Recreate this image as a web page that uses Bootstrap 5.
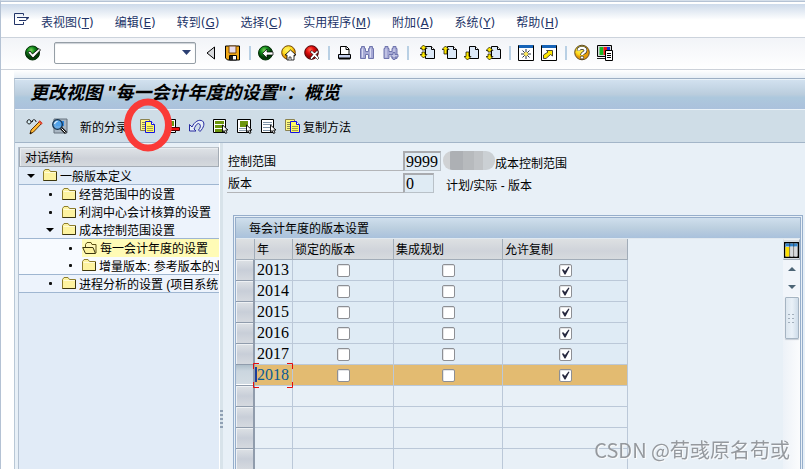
<!DOCTYPE html>
<html lang="zh-CN">
<head>
<meta charset="utf-8">
<meta name="viewport" content="width=device-width, initial-scale=1">
<title>更改视图 "每一会计年度的设置"：概览</title>
<link rel="stylesheet" href="https://cdn.jsdelivr.net/npm/bootstrap@5.3.0/dist/css/bootstrap.min.css">
<style>
body{font-family:"Liberation Sans","Noto Sans CJK SC",sans-serif;font-size:12px;line-height:18px;color:#000;background:#fff}
button,input{font:inherit;color:inherit}
button{background:none;border:0;padding:0}
svg{display:block;flex:none}
.app-shell{border-left:1px solid #b4c2d4;border-top:1px solid #d5dfea}
.menu-strip{height:37px;padding:6px 0 0 13px;gap:11px;border-top:1px solid #b4c2d4;background:linear-gradient(#fff 0 2px,#cddaea 2px,#fff 18px);border-bottom:1px solid #ccd3dc;font-family:"DejaVu Sans","Noto Sans CJK SC",sans-serif;color:#223468}
.menu-list{gap:21px}
.menu-list a{color:#223468;text-decoration:none;white-space:nowrap}
.std-bar{height:32px;padding:0 0 2px 24px;background:linear-gradient(#f2f4f8,#fff);border-bottom:1px solid #ccd1d9}
.command-box{width:142px;height:22px;border:1px solid #959ea6;border-radius:2px;background:#fff;margin:0 10px 0 13px;box-shadow:inset 0 1px 1px #cbd0d6}
.command-box input{border:0;background:none;min-width:0;outline:0}
.command-box button{width:22px}
.tool-sep{width:2px;height:14px;background:#b9d0e4;margin:0 7px 0 8px}
.tool-set{gap:7px}
.screen-wrap{margin-left:13px;background:linear-gradient(#fff,#e8eff6 8px);padding-top:8px}
.screen-pane{border-left:1px solid #b9c8d6;border-top:1px solid #9dafc4;background:#e8f0f7}
.title-bar{height:31px;padding:0 15px;border-top:1px solid #e9f2f9;border-bottom:1px solid #eaf2f8;background:linear-gradient(#d2e1ef,#bacddd 50%,#adc8dd 60%,#abc1dc);font-size:18px;line-height:27px;font-weight:700;font-style:italic;margin:0;white-space:nowrap}
.app-bar{height:33px;padding:0 11px;gap:8px;background:#cfdde7;border-bottom:1px solid #a3b5c8}
.icon-text{gap:2px}
.mark-wrap{position:relative}
.mark-ring{position:absolute;left:-17px;top:-20px;z-index:5;pointer-events:none}
.tree-pane{width:204px;flex:none;padding:4px 0 0 3px;border-right:0}
.tree-box{border-left:1px solid #b4c2d2;background:#e1ebf7}
.tree-head{height:20px;padding:2px 5px 0;border:1px solid #a4acb5;border-top-color:#bcc3ca;background:linear-gradient(#dfe3e7,#cdd1d8 60%,#d5d9dd);box-shadow:inset 1px 1px #e9ecef;margin-bottom:0;font-size:12px;line-height:16px;font-weight:400}
.tree-box ul{list-style:none;margin:0;padding:0}
.tree-row{height:18px;white-space:nowrap;overflow:hidden}
.tree-row button{white-space:nowrap;gap:2px;display:flex;align-items:center;overflow:hidden;text-align:left}
.tree-row button span{padding-top:2px}
.twig{width:12px;flex:none;display:flex;justify-content:center}
.tri{border:4px solid transparent;border-top-color:#000;border-bottom:0}
.dot{width:3px;height:3px;border-radius:1px;background:#111}
.lv-a{padding-left:6px}
.lv-b{padding-left:25px;background:#edf3fc}
.lv-c{padding-left:45px;background:#f7faff}
.twig+button{margin-left:6px}
.rule{border-bottom:1px solid #9fb6d1}
.current button{background:#fffbb6;height:18px;flex:1}
.splitter{width:4px;flex:none;background:#d8e3ea;border-left:1px solid #fff;padding-top:267px}
.grip{width:3px;height:19px;background:repeating-linear-gradient(#8fa0b4 0 2px,transparent 2px 4px)}
.form-rows{padding:8px 0 0 4px}
.form-line{height:22px}
.form-line label{width:176px;height:20px;line-height:22px;border-bottom:1px solid #b3b5b8;padding-left:1px}
.code-field{height:20px;border:2px solid #a9abaf;border-right-color:#b9c1c8;border-bottom-color:#b9c1c8;border-width:2px 1px 1px 2px;background:#dfebf4;padding:0 1px;outline:0;font-family:"Liberation Serif",serif;font-size:16px;line-height:16px}
.w-code{width:38px}.w-ver{width:31px}
.blotch{width:52px;height:19px;border-radius:9px;margin-left:2px;background:linear-gradient(90deg,#d0d2d4 0 7px,#adb0b4 7px 20px,#b7babd 20px 31px,#c0c3c6 31px 40px,#cbd0d4 40px)}
.grid-box{margin:20px 2px 0 10px;border:1px solid #96aecb;border-bottom:0;padding:1px 1px 0}
.grid-inner{border:1px solid #96aecb;border-bottom:0}
.grid-title{height:21px;margin:0;padding:2px 13px 0;font-size:12px;line-height:18px;font-weight:400;background:linear-gradient(#cfdfed,#bccfdf 50%,#a9c1dc);border-bottom:1px solid #e1e9f0}
.year-grid{table-layout:fixed;border-collapse:separate;border-spacing:0;width:392px;flex:none}
.year-grid th,.year-grid td{height:21px;padding:0 0 0 1px;border-right:1px solid #bbc8d8;border-bottom:1px solid #bbc8d8;line-height:18px;white-space:nowrap;vertical-align:middle}
.year-grid thead th{font-weight:400;height:20px;padding:2px 0 0 2px;background:linear-gradient(#dde0e2,#cfd3da 60%,#d6dade);border-color:#a1acb8}
.year-grid tbody th{background:linear-gradient(#dde1e5,#c8ced8 50%,#d5d9df);border-color:#909cac;border-right-width:2px;box-shadow:inset 1px 1px #eef1f4}
.year-grid .filled td{background:#dfebf5}
.year-grid .chosen td{background:#e3bb71}
.year-grid .chosen th{background:linear-gradient(#afbfca,#cbd6df 6px,#d3dce3);box-shadow:inset 0 -1px #fff}
.year-grid td.yr{font-family:"Liberation Serif",serif;font-size:16px;line-height:18px;padding-left:2px}
.year-grid td.ck{text-align:center}
.year-grid .chosen td.yr{color:#0a5c96;position:relative}
.focus-box{position:absolute;left:-2px;top:-2px;z-index:2;pointer-events:none}
.year-grid input{appearance:none;width:13px;height:13px;border:1px solid #8d8f94;border-radius:2px;background:#fff;box-shadow:inset 1px 1px #e4e5e7;display:block;margin:0 auto}
.year-grid input:checked{background:#fff url("data:image/svg+xml,%3Csvg xmlns='http://www.w3.org/2000/svg' viewBox='0 0 11 11'%3E%3Cpath d='M2 5l1-1 2 2 3.500-4.500 1 .5-4 7.500h-1z' fill='%2327293f'/%3E%3C/svg%3E") center/11px}
.scroll-col{width:17px;flex:none;background:linear-gradient(90deg,#edf2f8,#fbfcfd)}
.scroll-col .cfg{height:21px;border:1px solid #a1acb8;border-left-color:#d9dfe4;border-top-color:#edf0f3;background:#d7dce1;width:17px}
.scroll-col .step{height:18px;background:#f1f5fa}
.up,.down{width:0;border:4px solid transparent}
.up{border-bottom-color:#4c6475;border-top:0}
.down{border-top-color:#4c6475;border-bottom:0}
.knob{height:42px;width:14px;margin:1px auto 0;border:1px solid #a5b4c2;border-radius:1px;background:linear-gradient(90deg,#dce6ef,#e9f1f8 50%,#cedce9);box-shadow:0 1px 1px #c5cdd5}
.watermark{position:fixed;right:15px;bottom:4px;font-family:"Noto Sans CJK SC",sans-serif;font-size:20px;line-height:30px;color:#95999e;text-shadow:1px 1px #fafbfc;pointer-events:none;white-space:nowrap}
</style>
<script src="https://cdn.jsdelivr.net/npm/bootstrap@5.3.0/dist/js/bootstrap.bundle.min.js"></script>
</head>
<body>
<svg width="0" height="0" class="position-absolute" aria-hidden="true">
<defs>
<radialGradient id="gGreen" cx=".4" cy=".3"><stop offset="0" stop-color="#7fd45a"/><stop offset=".5" stop-color="#118c1c"/><stop offset="1" stop-color="#043c08"/></radialGradient>
<radialGradient id="gGold" cx=".4" cy=".3"><stop offset="0" stop-color="#fff46a"/><stop offset=".7" stop-color="#fdda1a"/><stop offset="1" stop-color="#e59b08"/></radialGradient>
<radialGradient id="gRed" cx=".4" cy=".3"><stop offset="0" stop-color="#ff6a50"/><stop offset=".5" stop-color="#e81010"/><stop offset="1" stop-color="#9a0303"/></radialGradient>
<symbol id="folder" viewBox="0 0 15 13"><path d="M.5 11.500V2.500L2 .5H6L7.500 2.500H13.500V11.500Z" fill="#fdf3a0" stroke="#8d7d2c"/><path d="M1.500 3.500h11.500" stroke="#fffbd8"/><path d="M.5 11.500h13V3" fill="none" stroke="#3b350f"/></symbol>
<symbol id="folderOpen" viewBox="0 0 16 13"><path d="M3.500 5V2.500L5 .5H9l1 2h4V11" fill="#fff8b8" stroke="#5d5115"/><path d="M.7 5.500H11l2.500 6H3.500Z" fill="#fdf3a0" stroke="#3b350f"/></symbol>
<symbol id="page" viewBox="0 0 16 16"><path d="M5.500 1.500h6l3 3v9h-9z" fill="#dce9f8" stroke="#000"/><path d="M11.500 1.500v3h3" fill="#fff" stroke="#000"/></symbol>
<symbol id="sheets" viewBox="0 0 16 16"><path d="M.5 1.500h9v11h-9z" fill="#fffa80" stroke="#8a8250"/><path d="M2 4.500h3M2 6.500h3M2 8.500h3M2 10.500h3" stroke="#8c8a55"/><path d="M5.500 3.500h6l3 3v8h-9z" fill="#fffb60" stroke="#1111e0"/><path d="M11.500 3.500v3h3" fill="#fff" stroke="#1111e0"/><path d="M7 8.500h6M7 10.500h6M7 12.500h6" stroke="#a3a050"/></symbol>
<symbol id="bino" viewBox="0 0 16 16"><path d="M2.500 1.500h3v2h1v3h3v-3h1v-2h3v2h1v10h-5v-4h-3v4h-5v-10h1z" fill="#a6a9d5" stroke="#7076ae"/><path d="M3.500 3.500v9M11.500 3.500v9" stroke="#d9dbf2"/></symbol>
<symbol id="listCursor" viewBox="0 0 16 16"><path d="M9.500 7v7l1.700-1.500 1.300 3 1.500-.7-1.300-2.800H15z" fill="#fff" stroke="#000" stroke-width=".9"/></symbol>
</defs>
</svg>

<div class="app-shell d-flex flex-column vh-100 overflow-hidden">
<nav class="menu-strip d-flex align-items-center flex-shrink-0" aria-label="菜单">
  <button aria-label="系统菜单" class="pb-2"><svg width="16" height="12" viewBox="0 0 16 12" fill="none" stroke="#223468"><path d="M9.500 2.500V.5H.5v11h9V9M3 4.500h11.500L12 7.500H5M3 4.500h4M5 7.500h4"/><path d="M12 6l3-1.500"/></svg></button>
  <div class="menu-list d-flex">
    <a href="#">表视图(<u>T</u>)</a><a href="#">编辑(<u>E</u>)</a><a href="#">转到(<u>G</u>)</a><a href="#">选择(<u>C</u>)</a><a href="#">实用程序(<u>M</u>)</a><a href="#">附加(<u>A</u>)</a><a href="#">系统(<u>Y</u>)</a><a href="#">帮助(<u>H</u>)</a>
  </div>
</nav>

<div class="std-bar d-flex align-items-center flex-shrink-0">
  <button aria-label="回车"><svg width="16" height="16" viewBox="0 0 16 16"><circle cx="7.500" cy="8" r="7" fill="url(#gGreen)" stroke="#032f06"/><path d="M3 7.500l2-1.500 2.500 3L14 3.500l1.500 1.500L8 13z" fill="#fff" stroke="#000" stroke-width=".8"/></svg></button>
  <div class="command-box d-flex"><input type="text" class="flex-grow-1" aria-label="命令"><button aria-label="展开命令列表"><svg width="10" height="6" viewBox="0 0 10 6" class="mx-auto"><path d="M0 0h9L4.500 5z" fill="#2b3f72"/></svg></button></div>
  <button aria-label="收起"><svg width="10" height="14" viewBox="0 0 10 14"><path d="M8.500 1v12L1 7z" fill="#d9dbde" stroke="#000"/></svg></button>
  <button aria-label="保存" class="ms-2"><svg width="17" height="16" viewBox="0 0 17 16"><path d="M1.500 1h14v14H3.500l-2-2z" fill="#f0a818" stroke="#000"/><path d="M5 1h7v7H5z" fill="#e7dced" stroke="#7b4a10"/><path d="M5.500 10.500h7V15h-7z" fill="#fff" stroke="#000"/><path d="M6 11h3v4H6z" fill="#222"/></svg></button>
  <span class="tool-sep"></span>
  <div class="tool-set d-flex">
    <button aria-label="返回"><svg width="16" height="16" viewBox="0 0 16 16"><circle cx="7.500" cy="8" r="7" fill="url(#gGreen)" stroke="#032f06"/><path d="M4.500 8.500L9 4v3h6v3H9v3z" fill="#fff" stroke="#000" stroke-width=".7"/></svg></button>
    <button aria-label="退出"><svg width="16" height="16" viewBox="0 0 16 16"><circle cx="7.500" cy="7.500" r="6.800" fill="url(#gGold)" stroke="#704400"/><path d="M4 10l5.500-5L15 10h-2v5h-7v-5z" fill="#fff" stroke="#000" stroke-width=".8"/><path d="M8 15v-3h2v3" fill="#fff" stroke="#000" stroke-width=".7"/></svg></button>
    <button aria-label="取消"><svg width="16" height="16" viewBox="0 0 16 16"><circle cx="7.500" cy="7.500" r="6.800" fill="url(#gRed)" stroke="#4c0000"/><path d="M6 7l2-1.500 2.500 2.500L13 5.500 14.500 7 12 9.500l3 3.500-1.500 1.500-3-3-3 3L6 13l3-3.500z" fill="#fff" stroke="#000" stroke-width=".6"/></svg></button>
  </div>
  <span class="tool-sep"></span>
  <div class="tool-set d-flex">
    <button aria-label="打印"><svg width="15" height="16" viewBox="0 0 15 16"><path d="M3.500 9V1.500h6l2.500 2.500v5" fill="#fff" stroke="#000"/><path d="M9 1.500V4.500h3" fill="none" stroke="#000"/><path d="M1.500 9.500h12v4h-12z" fill="#c6d0ed" stroke="#000"/><path d="M2 13.500h11" stroke="#000" stroke-width="2"/></svg></button>
    <button aria-label="查找"><svg width="16" height="16"><use href="#bino"/></svg></button>
    <button aria-label="继续查找"><svg width="17" height="16"><use href="#bino"/><path d="M11 7.500h2v2h3v2.500h-3v2.500h-2v-2.500H9v-2.500h2z" fill="#c5c7e6" stroke="#7076ae"/></svg></button>
  </div>
  <span class="tool-sep"></span>
  <div class="tool-set d-flex ms-1">
    <button aria-label="首页"><svg width="15" height="16" viewBox="0 0 15 16"><use href="#page" width="16" height="16"/><path d="M3.500 0L7 3.500H5V5H2V3.500H0zM3.500 13L7 9.500H5V7H2v2.500H0z" fill="#ffe900" stroke="#000" stroke-width=".7"/></svg></button>
    <button aria-label="上一页"><svg width="15" height="16" viewBox="0 0 15 16"><use href="#page" width="16" height="16"/><path d="M3.500 1L7 4.500H5V9H2V4.500H0z" fill="#ffe900" stroke="#000" stroke-width=".7"/></svg></button>
    <button aria-label="下一页"><svg width="15" height="16" viewBox="0 0 15 16"><use href="#page" width="16" height="16"/><path d="M3.500 15L7 11.500H5V7H2v4.500H0z" fill="#ffe900" stroke="#000" stroke-width=".7"/></svg></button>
    <button aria-label="末页"><svg width="15" height="16" viewBox="0 0 15 16"><use href="#page" width="16" height="16"/><path d="M3.500 2L7 5.500H5V7H2V5.500H0zM3.500 15L7 11.500H5V9H2v2.500H0z" fill="#ffe900" stroke="#000" stroke-width=".7"/></svg></button>
  </div>
  <span class="tool-sep"></span>
  <div class="tool-set d-flex">
    <button aria-label="新建会话"><svg width="16" height="17" viewBox="0 0 16 17"><path d="M.5 1.500h15v15H.5z" fill="#fff" stroke="#000"/><path d="M1 1h14v3H1z" fill="#1764b8"/><path d="M8 5v10M3 10h10M4.500 6.500l7 7M11.500 6.500l-7 7" stroke="#26313f"/><circle cx="8" cy="10" r="2" fill="#ffe95a"/></svg></button>
    <button aria-label="创建快捷方式"><svg width="16" height="17" viewBox="0 0 16 17"><path d="M.5 1.500h15v15H.5z" fill="#fff" stroke="#000"/><path d="M1 1h14v3H1z" fill="#1764b8"/><path d="M2.500 14.500v-3.500L7 8 5.500 6.500h6v5.500L9.500 10.500 5 14.500z" fill="#ffe900" stroke="#222" stroke-width=".8"/></svg></button>
  </div>
  <span class="tool-sep"></span>
  <div class="tool-set d-flex">
    <button aria-label="帮助"><svg width="16" height="17" viewBox="0 0 16 17"><circle cx="8" cy="8.500" r="7.300" fill="url(#gGold)" stroke="#5f4a22"/><path d="M4.500 6.500C4.500 3 11.500 3 11.500 6.500 11.500 9 8 8.500 8 11" fill="none" stroke="#222" stroke-width="3.500"/><path d="M4.500 6.500C4.500 3 11.500 3 11.500 6.500 11.500 9 8 8.500 8 11" fill="none" stroke="#fff" stroke-width="2.200"/><circle cx="8" cy="13.500" r="1.600" fill="#fff" stroke="#222" stroke-width=".7"/></svg></button>
    <button aria-label="定制本地布局"><svg width="16" height="17" viewBox="0 0 16 17"><path d="M.5 1.500h14v11H.5z" fill="#d5d7da" stroke="#000"/><path d="M2.500 3h4v8h-4z" fill="#18b822"/><path d="M6.500 3h3.500v8H6.500z" fill="#ef1512"/><path d="M10 3h3v8h-3z" fill="#182fd0"/><path d="M0 14.500h9" stroke="#222"/><path d="M8.500 6.500H15.500v10H8.500z" fill="#fff" stroke="#000"/><path d="M10 9.500h4M10 11.500h4M10 13.500h4" stroke="#000"/></svg></button>
  </div>
</div>

<main class="screen-wrap flex-grow-1 d-flex flex-column overflow-hidden">
<div class="screen-pane flex-grow-1 d-flex flex-column overflow-hidden">
  <h1 class="title-bar flex-shrink-0">更改视图 "每一会计年度的设置"：概览</h1>
  <div class="app-bar d-flex align-items-center flex-shrink-0" role="toolbar" aria-label="应用工具栏">
    <button aria-label="显示/更改"><svg width="17" height="17" viewBox="0 0 17 17"><path d="M1 4c0-3 4-3 4 0S1 6 1 4zM6 4c0-3 4-3 4 0M5 4l2-1" fill="#d8eef6" stroke="#111"/><path d="M14 3l2 2-8.500 9L4 16l1-4z" fill="#ffb833" stroke="#5c3508"/><path d="M13 3l3 3" stroke="#e44b3c" stroke-width="2"/><path d="M4 16l.5-2 1.500 1z" fill="#000"/></svg></button>
    <button aria-label="明细"><svg width="17" height="17" viewBox="0 0 17 17"><path d="M3 1h13v14H3z" fill="#a9b6c3" stroke="#66737f"/><path d="M5 3h8v5H5z" fill="#2d86df"/><circle cx="6.500" cy="6.500" r="4.800" fill="#59a9ee" fill-opacity=".8" stroke="#16324e" stroke-width="1.300"/><path d="M3.500 6a3 3 0 0 1 3-2.500" fill="none" stroke="#fff"/><path d="M10 10l5 5" stroke="#111" stroke-width="3"/><path d="M10.500 10.500l4 4" stroke="#fff"/></svg></button>
    <button class="ms-1 pt-1">新的分录</button>
    <button class="mark-wrap ms-1" aria-label="复制为"><svg width="16" height="16"><use href="#sheets"/></svg>
      <svg class="mark-ring" width="50" height="55" viewBox="0 0 50 55" aria-hidden="true"><ellipse cx="25" cy="27" rx="20.500" ry="23" fill="none" stroke="#fa3a37" stroke-width="7"/></svg></button>
    <button aria-label="删除"><svg width="17" height="16" viewBox="0 0 17 16"><path d="M1.500 1.500h10v13h-10z" fill="#fff" stroke="#000"/><path d="M3 3h7v5H3z" fill="#6c950d"/><path d="M3 12.500h8" stroke="#8c9eae"/><path d="M4.500 9.500H15.500v3H4.500z" fill="#f01010" stroke="#5a0000"/></svg></button>
    <button aria-label="撤销更改"><svg width="16" height="16" viewBox="0 0 16 16"><path d="M.5 6.500v6.500h6.500l-2-2c2-4.500 4-6.500 5.500-5s1 4-1 6l1.500 1.500C15 9.500 16 5 13.500 3 10 1 5.500 3.500 3 9z" fill="#e6eef8" stroke="#262aa0"/></svg></button>
    <button aria-label="全选"><svg width="16" height="16"><path d="M.5 1.500h12v13H.5z" fill="#fff" stroke="#000"/><path d="M2 3h9v3H2zM2 7h9v3H2zM2 11h9v3H2z" fill="#6c950d"/><use href="#listCursor"/></svg></button>
    <button aria-label="选择块"><svg width="16" height="16"><path d="M.5 1.500h13v13H.5z" fill="#fff" stroke="#000"/><path d="M3 3h8v6H3z" fill="#6c950d"/><path d="M2 10.500h8M2 12.500h8" stroke="#8c9eae"/><use href="#listCursor"/></svg></button>
    <button aria-label="取消全选"><svg width="16" height="16"><path d="M.5 1.500h12v13H.5z" fill="#fff" stroke="#000"/><path d="M2 4.500h9M2 6.500h9M2 9.500h9M2 12.500h9" stroke="#7f94a7"/><use href="#listCursor"/></svg></button>
    <button class="icon-text d-flex align-items-center"><svg width="16" height="16"><use href="#sheets"/></svg><span class="pt-1">复制方法</span></button>
  </div>

  <div class="d-flex flex-grow-1 overflow-hidden">
    <aside class="tree-pane d-flex flex-column">
      <div class="tree-box flex-grow-1">
        <h2 class="tree-head">对话结构</h2>
        <ul>
          <li class="tree-row lv-a rule d-flex align-items-center"><span class="twig"><i class="tri"></i></span><button><svg width="15" height="13"><use href="#folder"/></svg><span>一般版本定义</span></button></li>
          <li class="tree-row lv-b d-flex align-items-center"><span class="twig"><i class="dot"></i></span><button><svg width="15" height="13"><use href="#folder"/></svg><span>经营范围中的设置</span></button></li>
          <li class="tree-row lv-b d-flex align-items-center"><span class="twig"><i class="dot"></i></span><button><svg width="15" height="13"><use href="#folder"/></svg><span>利润中心会计核算的设置</span></button></li>
          <li class="tree-row lv-b rule d-flex align-items-center"><span class="twig"><i class="tri"></i></span><button><svg width="15" height="13"><use href="#folder"/></svg><span>成本控制范围设置</span></button></li>
          <li class="tree-row lv-c current d-flex align-items-center"><span class="twig"><i class="dot"></i></span><button><svg width="16" height="13"><use href="#folderOpen"/></svg><span>每一会计年度的设置</span></button></li>
          <li class="tree-row lv-c rule d-flex align-items-center"><span class="twig"><i class="dot"></i></span><button><svg width="15" height="13"><use href="#folder"/></svg><span>增量版本: 参考版本的业</span></button></li>
          <li class="tree-row lv-b rule d-flex align-items-center"><span class="twig"><i class="dot"></i></span><button><svg width="15" height="13"><use href="#folder"/></svg><span>进程分析的设置 (项目系统</span></button></li>
        </ul>
      </div>
    </aside>
    <div class="splitter"><div class="grip"></div></div>
    <section class="flex-grow-1 d-flex flex-column overflow-hidden">
      <div class="form-rows">
        <div class="form-line d-flex"><label for="area">控制范围</label><input id="area" class="code-field w-code" value="9999" readonly><span class="blotch"></span><span class="pt-1">成本控制范围</span></div>
        <div class="form-line d-flex"><label for="ver">版本</label><input id="ver" class="code-field w-ver" value="0" readonly><span class="pt-1 ms-2 ps-1">计划/实际 - 版本</span></div>
      </div>
      <div class="grid-box flex-grow-1 overflow-hidden d-flex flex-column">
        <div class="grid-inner flex-grow-1 d-flex flex-column overflow-hidden">
        <h2 class="grid-title flex-shrink-0">每会计年度的版本设置</h2>
        <div class="d-flex justify-content-between flex-grow-1 overflow-hidden">
          <div class="overflow-hidden">
          <table class="year-grid">
            <colgroup><col style="width:19px"><col style="width:38px"><col style="width:101px"><col style="width:109px"><col style="width:125px"></colgroup>
            <thead><tr><th></th><th scope="col">年</th><th scope="col">锁定的版本</th><th scope="col">集成规划</th><th scope="col">允许复制</th></tr></thead>
            <tbody>
              <tr class="filled"><th></th><td class="yr">2013</td><td class="ck"><input type="checkbox" aria-label="2013 锁定的版本"></td><td class="ck"><input type="checkbox" aria-label="2013 集成规划"></td><td class="ck"><input type="checkbox" checked aria-label="2013 允许复制"></td></tr>
              <tr class="filled"><th></th><td class="yr">2014</td><td class="ck"><input type="checkbox" aria-label="2014 锁定的版本"></td><td class="ck"><input type="checkbox" aria-label="2014 集成规划"></td><td class="ck"><input type="checkbox" checked aria-label="2014 允许复制"></td></tr>
              <tr class="filled"><th></th><td class="yr">2015</td><td class="ck"><input type="checkbox" aria-label="2015 锁定的版本"></td><td class="ck"><input type="checkbox" aria-label="2015 集成规划"></td><td class="ck"><input type="checkbox" checked aria-label="2015 允许复制"></td></tr>
              <tr class="filled"><th></th><td class="yr">2016</td><td class="ck"><input type="checkbox" aria-label="2016 锁定的版本"></td><td class="ck"><input type="checkbox" aria-label="2016 集成规划"></td><td class="ck"><input type="checkbox" checked aria-label="2016 允许复制"></td></tr>
              <tr class="filled"><th></th><td class="yr">2017</td><td class="ck"><input type="checkbox" aria-label="2017 锁定的版本"></td><td class="ck"><input type="checkbox" aria-label="2017 集成规划"></td><td class="ck"><input type="checkbox" checked aria-label="2017 允许复制"></td></tr>
              <tr class="chosen"><th></th><td class="yr">2018<svg class="focus-box" width="40" height="25" viewBox="0 0 40 25" fill="none" stroke="#e60c0c" aria-hidden="true"><path d="M.5 6V.5H6M34 .5h5.500V6M39.500 19v5.500H34M6 24.500H.5V19"/><path d="M3 4v15" stroke="#1c3e9a" stroke-width="2"/></svg></td><td class="ck"><input type="checkbox" aria-label="2018 锁定的版本"></td><td class="ck"><input type="checkbox" aria-label="2018 集成规划"></td><td class="ck"><input type="checkbox" checked aria-label="2018 允许复制"></td></tr>
              <tr><th></th><td></td><td></td><td></td><td></td></tr>
              <tr><th></th><td></td><td></td><td></td><td></td></tr>
              <tr><th></th><td></td><td></td><td></td><td></td></tr>
              <tr><th></th><td></td><td></td><td></td><td></td></tr>
            </tbody>
          </table>
          </div>
          <div class="scroll-col d-flex flex-column">
            <button class="cfg flex-shrink-0" aria-label="配置"><svg width="15" height="16" viewBox="0 0 15 16"><path d="M.7.700h13.600v14.600H.7z" fill="#fff" stroke="#000" stroke-width="1.400"/><path d="M1.500 1.500h12v3h-12z" fill="#2f83cc"/><path d="M1.500 5h4v9.500h-4z" fill="#ffe100"/><path d="M6.500 5H9v9.500H6.500zM10.500 5H13v9.500h-2.500z" fill="#d7dadd"/><path d="M5.700 1v14M9.700 1v14" stroke="#333" stroke-width=".7"/></svg></button>
            <button class="step d-flex align-items-center justify-content-center" aria-label="向上滚动"><i class="up"></i></button>
            <button class="step d-flex align-items-center justify-content-center" aria-label="向下滚动"><i class="down"></i></button>
            <div class="knob d-flex align-items-center justify-content-center flex-shrink-0"><svg width="7" height="9" fill="#a2afbc"><path d="M0 0h2v1H0zM4 0h2v1H4zM0 4h2v1H0zM4 4h2v1H4zM0 8h2v1H0zM4 8h2v1H4z"/></svg></div>
          </div>
        </div>
        </div>
      </div>
    </section>
  </div>
</div>
</main>
</div>
<div class="watermark">CSDN @荀彧原名苟或</div>
</body>
</html>
